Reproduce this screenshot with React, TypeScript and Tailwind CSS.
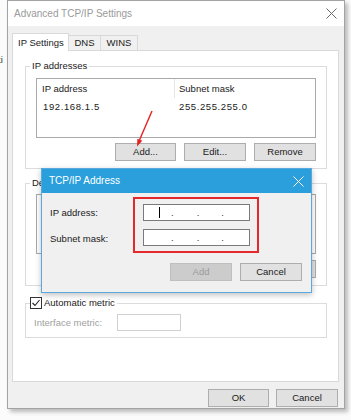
import React from "react";

function Btn({
  children,
  className = "",
  disabled = false,
}: {
  children: React.ReactNode;
  className?: string;
  disabled?: boolean;
}) {
  return (
    <div
      className={`flex items-center justify-center h-[18px] border ${
        disabled
          ? "bg-[#cccccc] border-[#bfbfbf] text-[#9b9b9b]"
          : "bg-[#e1e1e1] border-[#adadad] text-[#1a1a1a]"
      } ${className}`}
    >
      {children}
    </div>
  );
}

function CloseIcon({ color }: { color: string }) {
  return (
    <svg width="11" height="11" viewBox="0 0 11 11">
      <path d="M0.5 0.5 L10.5 10.5 M10.5 0.5 L0.5 10.5" stroke={color} strokeWidth="1" fill="none" />
    </svg>
  );
}

function ListBox({ rows }: { rows: string[][] }) {
  return (
    <div className="ml-[10px] w-[280px] h-[60px] border border-[#a9a9a9] bg-white">
      <div className="flex h-[19px]">
        <div className="w-[138px] pl-[5px] flex items-center border-r border-[#e5e5e5]">
          {rows.length ? "IP address" : ""}
        </div>
        <div className="pl-[4px] flex items-center">{rows.length ? "Subnet mask" : ""}</div>
      </div>
      {rows.map((r) => (
        <div key={r[0]} className="flex h-[18px] items-center tracking-[0.6px]">
          <div className="w-[138px] pl-[6px]">{r[0]}</div>
          <div className="pl-[4px]">{r[1]}</div>
        </div>
      ))}
    </div>
  );
}

function ListButtons() {
  return (
    <div className="flex justify-end gap-[8px] pr-[10px]">
      <Btn className="w-[61px]">Add...</Btn>
      <Btn className="w-[62px]">Edit...</Btn>
      <Btn className="w-[62px]">Remove</Btn>
    </div>
  );
}

function IpField({ caret = false }: { caret?: boolean }) {
  return (
    <div className="w-[107px] h-[17px] border border-[#7a7a7a] bg-white flex items-center text-[#333]">
      <div className="w-[27px] flex items-center">
        {caret && <div className="ml-[15px] w-px h-[11px] bg-black" />}
      </div>
      <span>.</span>
      <div className="w-[23px]" />
      <span>.</span>
      <div className="w-[22px]" />
      <span>.</span>
    </div>
  );
}

export default function App() {
  return (
    <div className="relative w-[351px] h-[420px] bg-[#fbfbfb] overflow-hidden flex font-['Liberation_Sans',Arial,sans-serif] text-[9.5px] leading-[12px] text-[#1a1a1a]">
      {/* window behind */}
      <div className="w-[7px] overflow-hidden pt-[54px] text-[#333]">
        <span className="block -ml-[2px]">ti</span>
      </div>

      {/* Advanced TCP/IP Settings */}
      <div className="w-[338px] h-[409px] border border-[#a3a3a3] bg-[#f0f0f0] shadow-[3px_3px_4px_rgba(0,0,0,0.25)] flex flex-col">
        <div className="h-[25px] bg-white flex items-center justify-between pl-[6px] pr-[7px]">
          <span className="text-[10px] text-[#9a9a9a]">Advanced TCP/IP Settings</span>
          <CloseIcon color="#6b6b6b" />
        </div>

        {/* tabs */}
        <div className="h-[24px] flex items-end pl-[4px]">
          <div className="relative z-10 h-[18px] -mb-px w-[57px] bg-white border border-b-0 border-[#d9d9d9] flex items-center pl-[5px]">
            IP Settings
          </div>
          <div className="h-[15px] w-[32px] border-t border-r border-[#d9d9d9] flex items-center justify-center">
            DNS
          </div>
          <div className="h-[15px] w-[37px] border-t border-r border-[#d9d9d9] flex items-center justify-center">
            WINS
          </div>
        </div>

        {/* panel */}
        <div className="ml-[4px] mr-[5px] h-[332px] border border-[#d9d9d9] bg-white pl-[12px] pr-[11px]">
          <fieldset className="mt-[9px] border border-[#dcdcdc] pb-[7px]">
            <legend className="ml-[4px] px-[2px]">IP addresses</legend>
            <div className="mt-[6px]">
              <ListBox rows={[["192.168.1.5", "255.255.255.0"]]} />
            </div>
            <div className="mt-[5px]">
              <ListButtons />
            </div>
          </fieldset>

          <fieldset className="mt-[8px] border border-[#dcdcdc] pb-[7px]">
            <legend className="ml-[4px] px-[2px]">Default gateways:</legend>
            <div className="mt-[5px]">
              <ListBox rows={[]} />
            </div>
            <div className="mt-[6px]">
              <ListButtons />
            </div>
          </fieldset>

          <fieldset className="mt-[11px] border border-[#dcdcdc] pb-[6px]">
            <legend className="ml-[4px] pr-[2px] flex items-center gap-[2px]">
              <svg width="12" height="12" viewBox="0 0 12 12">
                <rect x="0.5" y="0.5" width="11" height="11" fill="white" stroke="#333" />
                <path d="M2.5 6 L5 8.5 L9.5 3" stroke="#222" strokeWidth="1.1" fill="none" />
              </svg>
              <span>Automatic metric</span>
            </legend>
            <div className="mt-[5px] flex items-center pl-[8px] text-[#a0a0a0]">
              <span className="w-[83px]">Interface metric:</span>
              <div className="w-[64px] h-[17px] border border-[#d0d0d0] bg-white" />
            </div>
          </fieldset>
        </div>

        {/* footer */}
        <div className="mt-[7px] flex justify-end gap-[7px] pr-[6px]">
          <Btn className="w-[61px]">OK</Btn>
          <Btn className="w-[62px]">Cancel</Btn>
        </div>
      </div>

      {/* TCP/IP Address dialog */}
      <div className="absolute left-[41px] top-[168px] w-[271px] h-[125px] border border-[#5aa9dc] bg-[#f0f0f0] shadow-[0_2px_6px_rgba(0,0,0,0.25)] flex flex-col">
        <div className="h-[24px] bg-[#2a9fdc] flex items-center justify-between pl-[7px] pr-[7px]">
          <span className="text-[10px] text-white">TCP/IP Address</span>
          <CloseIcon color="#ffffff" />
        </div>
        <div className="flex pl-[8px] mt-[4px]">
          <div className="w-[83px] flex flex-col gap-[9px] pt-[7px]">
            <div className="h-[17px] flex items-center">IP address:</div>
            <div className="h-[17px] flex items-center">Subnet mask:</div>
          </div>
          <div className="w-[126px] border-2 border-[#e5282c] px-[8px] py-[5px] flex flex-col gap-[8px]">
            <IpField caret />
            <IpField />
          </div>
        </div>
        <div className="mt-[10px] flex justify-end gap-[8px] pr-[9px]">
          <Btn disabled className="w-[62px]">Add</Btn>
          <Btn className="w-[62px]">Cancel</Btn>
        </div>
      </div>

      {/* red arrow */}
      <svg className="absolute left-0 top-0 pointer-events-none" width="351" height="420">
        <line x1="152" y1="111" x2="139.5" y2="140" stroke="#e3211f" strokeWidth="1.4" />
        <polygon points="142.3,140.8 137.4,138.7 137,146.5" fill="#e3211f" />
      </svg>
    </div>
  );
}
